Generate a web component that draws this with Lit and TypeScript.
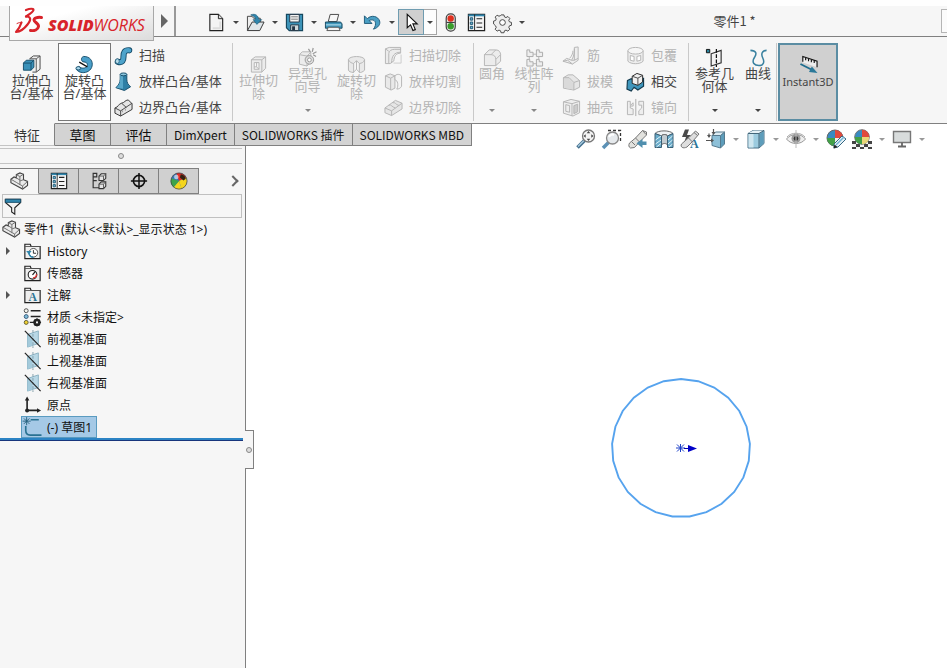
import { LitElement, html, svg, css, nothing, TemplateResult } from "lit";
import { customElement, property, state } from "lit/decorators.js";
import { classMap } from "lit/directives/class-map.js";

/* Every icon is drawn on a 20 x 20 grid. */
const ICONS: Record<string, TemplateResult> = {
  "new": svg`<path d="M3 1.5h9l4.5 4.5v12.5h-13.500z" fill="#f4f4f4" stroke="#222" stroke-width="1.2"/><path d="M12 1.500v4.500h4.500" fill="#ddd" stroke="#222"/><path d="M14 9v7h-8" fill="none" stroke="#ddd" stroke-width="2"/>`,
  open: svg`<path d="M1.500 18.500V3.500h5l1.500 2h7v5" fill="#eee" stroke="#444"/><path d="M1.500 18.500l5-9h12.500l-4.500 9z" fill="#dfe6ea" stroke="#333"/><path d="M5 2c5-2 8 1 8.500 5h3l-5 5-4-5h2.500c0-3-2-4-5-5z" fill="#2f86ad" stroke="#1c5c7c" stroke-width=".7"/>`,
  save: svg`<path d="M1.500 1.500h17v17h-14l-3-3z" fill="#3d93b8" stroke="#16485f" stroke-width="1.200"/><path d="M5 1.500h10v8H5z" fill="#f3f3f3" stroke="#234"/><path d="M6.500 4h7M6.500 6.500h7" stroke="#777"/><path d="M6 12.500h8.500v6H6z" fill="#cfd8dc" stroke="#234"/><path d="M7.500 14h3v4h-3z" fill="#234"/>`,
  print: svg`<path d="M6.500 1.500h9l-2 7.500h-9z" fill="#f7f7f7" stroke="#444"/><path d="M1.500 9.500h16l1.500 2v4.500h-17.500z" fill="#3f96ba" stroke="#16485f"/><path d="M2 12.500h16" stroke="#c5e6f2"/><path d="M4.500 15h11l1.500 3.500h-14z" fill="#f3f3f3" stroke="#555"/>`,
  undo: svg`<path d="M1.500 3v8h8l-3-3c4-2 7.500 0 6.500 5-.3 1.500-1 2.500-2 4 5-1.500 7.500-5 6.500-8.500C16 3.500 9 1.500 4.500 6z" fill="#4a9fc4" stroke="#205a78"/>`,
  cursor: svg`<path d="M5.500 1.500v14l3.500-3 2.500 6 2.500-1-2.500-6h4.500z" fill="#fff" stroke="#111" stroke-width="1.200"/>`,
  traffic: svg`<rect x="5.500" y="1" width="9.500" height="18" rx="4.500" fill="#eee" stroke="#444" stroke-width="1.300"/><circle cx="10.200" cy="5.800" r="3.400" fill="#e0301e"/><circle cx="10.200" cy="14" r="3.400" fill="#399c2b"/><path d="M6 9.900h8.500" stroke="#222"/>`,
  list: svg`<path d="M1.500 1.500h17v17h-17z" fill="#f6f6f6" stroke="#222" stroke-width="1.300"/><path d="M1.500 1.500h17v2h-17z" fill="#2f86ad"/><path d="M8 1.500v17" stroke="#222"/><path d="M3.500 5h2.500v2.500H3.500zM3.500 9.500h2.500v2.500H3.500zM3.500 14h2.500v2.500H3.500z" fill="#75b4d0" stroke="#1d5976"/><path d="M10 6h6M10 10.500h6M10 15h6" stroke="#222" stroke-width="1.200"/>`,
  gear: svg`<path d="M8.500 2h3l.6 2.100 1.600.7 2-1.100 2 2-1.100 2 .7 1.600 2.100.6v3l-2.100.6-.7 1.600 1.100 2-2 2-2-1.100-1.600.7-.6 2.100h-3l-.6-2.100-1.600-.7-2 1.100-2-2 1.100-2-.7-1.600L.6 11.500v-3l2.100-.6.7-1.600-1.100-2 2-2 2 1.100 1.600-.7z" fill="#eee" stroke="#444"/><circle cx="10" cy="10" r="3" fill="#fff" stroke="#444"/>`,

  extrude: svg`<path d="M8 4l4-3h7v14l-4 3h-4" fill="#f0f0f0" stroke="#444"/><path d="M15 4v14M15 4l4-3M8 4h7" fill="none" stroke="#555"/><path d="M1.500 8.500l3-3h8v7.500l-3 3h-8z" fill="#3a91b9" stroke="#174e6b"/><path d="M1.500 8.500h8v7.500M9.500 8.500l3-3" fill="none" stroke="#174e6b"/>`,
  revolve: svg`<path d="M9 1.500c7 0 10 5 9 10-1 5-6 7.500-10.500 7-3-.4-5-1.600-6-3.500l2.500-3c2 2 6 2.500 8 .5 2-2 1-4.500-1.500-5L8 7C6 5 6.500 2.500 9 1.500z" fill="#4a9fc9" stroke="#174e6b"/><path d="M4.500 7.500l8.500 5" stroke="#111" stroke-width="1.300"/><ellipse cx="3.500" cy="14" rx="2.500" ry="1.800" fill="#a9d6ea" stroke="#174e6b"/>`,
  sweep: svg`<path d="M4 16.500c5 1.500 6-1.500 6-5.500 0-4 1-7 6-6.500" fill="none" stroke="#174e6b" stroke-width="6.500" stroke-linecap="round"/><path d="M4 16.500c5 1.500 6-1.500 6-5.500 0-4 1-7 6-6.500" fill="none" stroke="#4da3cb" stroke-width="4.500" stroke-linecap="round"/><ellipse cx="3.500" cy="16" rx="2" ry="2.500" fill="#b5dceb" stroke="#174e6b" stroke-width=".7"/>`,
  loft: svg`<path d="M6.500 2.500h7v5c0 4 1.500 6 4 8l-6.500 4-9-3c2.500-2.500 4.500-5 4.500-9z" fill="#2f7fa5" stroke="#174e6b"/><path d="M6.500 2.500h3v15l-7-1c2.500-2.500 4-5 4-9z" fill="#58a7c9"/><ellipse cx="10" cy="2.500" rx="3.500" ry="1.500" fill="#8cc5dc" stroke="#174e6b"/>`,
  boundary: svg`<path d="M1 10.500c4-1 3-4 7-5s3-3 7-3.500l4 4v6l-12 7-6-3z" fill="#e5e5e5" stroke="#333"/><path d="M1 10.500l6 3 12-8M7 13.500V19M8 5.500l5 4.500" fill="none" stroke="#444"/><path d="M9 15v-2M12 13.300v-2" stroke="#999"/>`,

  extrudeCut: svg`<path d="M2.500 5l4-3h11v12l-4 4h-11z" fill="#ececec" stroke="#b4b4b4"/><path d="M2.500 5h11v13M13.500 5l4-3" fill="none" stroke="#b4b4b4"/><path d="M5.500 8h5v7h-5z" fill="#f8f8f8" stroke="#b4b4b4"/><path d="M8 8v4.500H5.500M8 12.500l2.500 2.500" fill="none" stroke="#b4b4b4"/>`,
  hole: svg`<path d="M1.500 7l3-3h9v11l-4 4-8-2z" fill="#ececec" stroke="#b4b4b4"/><path d="M1.500 7l8 1.500V19M9.500 8.500l4-4" fill="none" stroke="#b4b4b4"/><circle cx="12" cy="12.500" r="4.500" fill="#ddd" stroke="#999"/><circle cx="12" cy="12.500" r="2" fill="#fff" stroke="#999"/><path d="M11 1l2 3M16 0l-1 4M19.500 4l-4 2M19 9l-3-2" stroke="#999" stroke-width="1.300"/>`,
  revolveCut: svg`<path d="M1.500 5C2 .5 18 .5 18.500 5v11c-2 2-4 2.500-5.500 2.500V9L10 6 7 9v9.500C4 18 2 17.500 1.500 16z" fill="#e9e9e9" stroke="#b4b4b4"/><path d="M10 6v9l-3 3M10 15l3 3M1.500 5C3 8 5 8.500 7 9M18.500 5c-1 3-3 3.500-5.500 4" fill="none" stroke="#b4b4b4"/>`,
  sweepCut: svg`<path d="M1.500 3l4-1.500h12v6c-5 0-7 4-7 8l-4 3h-5z" fill="#ececec" stroke="#b4b4b4"/><path d="M5 18V8c0-3 3-4.500 6-4.500h6.500M1.500 3L5 5.500M8 18c0-8 3-11 9-11.500" fill="none" stroke="#b4b4b4"/><path d="M10 18h8V9" fill="none" stroke="#ccc"/>`,
  loftCut: svg`<path d="M1.500 4l5-2 5 2v13l-4 2-6-3z" fill="#e9e9e9" stroke="#b4b4b4"/><path d="M1.500 4L7 6.500 11.500 4M7 6.500V19" fill="none" stroke="#b4b4b4"/><path d="M11.500 4c3-3 7-1 7 1v10c-1 2-3 3-5 3 2-4 1-9-2-10z" fill="#f4f4f4" stroke="#b4b4b4"/>`,
  boundaryCut: svg`<path d="M1 10.500l11-8 7 3v6l-11 7-7-3z" fill="#e6e6e6" stroke="#b4b4b4"/><path d="M1 10.500l7 3 11-8M8 13.500v5M5 7.500c3-1 3 2 7 3M9 5c3-1 3 2 7 3" fill="none" stroke="#b4b4b4"/>`,
  fillet: svg`<path d="M1.500 7l5-5h7c3.500 0 5 2.500 5 5v7l-5 4.500h-12z" fill="#ececec" stroke="#b4b4b4"/><path d="M1.500 7h7c3.500 0 5 2.500 5 5v6.500M13.500 12l5-5M8.500 7l5-5" fill="none" stroke="#b4b4b4"/>`,
  pattern: svg`<path d="M2 2h3v2.500h3.500V9H2zM2 12h3v2.500h3.500V19H2zM12 2h3v2.500h3.500V9H12zM12 12h3v2.500h3.500V19H12z" fill="#eee" stroke="#aaa"/><path d="M8.500 6.500H12M4.500 9v3M14.500 9v3M8.500 16.500H12" stroke="#b4b4b4"/>`,
  rib: svg`<path d="M13 1.500l4-.5v14l-6 4-10-3 4-3 5 2c3-5 3-8 3-13.500z" fill="#eee" stroke="#b4b4b4"/><path d="M13 3v12l-3 0M13 15l4-2M1 16l5-1 5 4M8 13c2-2 3.500-5 3.500-8" fill="none" stroke="#b4b4b4"/>`,
  draft: svg`<path d="M1.500 6l5-3h5l7 6v7l-6 3-11-2z" fill="#e6e6e6" stroke="#b4b4b4"/><path d="M2 6.500h5l5 5v7l-10-2z" fill="#dadada"/><path d="M1.500 6h6l5 5v8M12.500 11l6-2" fill="none" stroke="#b4b4b4"/>`,
  shell: svg`<path d="M1.500 4l8-2.500 9 2v12l-7 3.500-10-3z" fill="#eee" stroke="#b4b4b4"/><path d="M1.500 4l9 2v13M10.500 6l8-2.500M4 7l4 1v7l-4-1z" fill="none" stroke="#b4b4b4"/><path d="M12.500 8l4-1.500v8l-4 2z" fill="#ccc" stroke="#b4b4b4"/>`,
  wrap: svg`<path d="M2 5v11c3 3.500 13 3.500 16 0V5" fill="#eee" stroke="#b4b4b4"/><ellipse cx="10" cy="5" rx="8" ry="3.500" fill="#f6f6f6" stroke="#b4b4b4"/><path d="M4.500 10l4 1v5l-4-1zM11.500 11l4-1v5l-4 1z" fill="#fff" stroke="#b4b4b4"/>`,
  intersect: svg`<path d="M1.500 9l4-2 4 3 4 2 5-4V6v9l-6 4-4-3-3 4-4.500-2z" fill="#3f96bc" stroke="#12394d" stroke-width="1.200"/><path d="M6.500 4.500l5-3 6 2v7l-5 3.500-6-2z" fill="#f0f0f0" stroke="#222"/><path d="M6.500 4.500l6 2 5-3M12.500 6.500V14" fill="none" stroke="#444"/>`,
  mirror: svg`<path d="M1.500 3.500v14h6v-6l-3-1v-2h3V5l-3 3v-4.500zM18.500 3.500v14h-5v-4l3-3v-3h-3v-4z" fill="#eee" stroke="#b4b4b4"/><path d="M10.300 1v18" stroke="#aaa"/>`,
  refgeo: svg`<path d="M1.500 1.500h3.500v3.500H1.500z" fill="#2b86a0" stroke="#111"/><path d="M6.500 6l10.500-3.500v13L6.500 19z" fill="#f3f3f3" stroke="#333" stroke-width="1.200"/><path d="M12 1v19" stroke="#111" stroke-width="1.300" stroke-dasharray="4 1.500"/>`,
  curve: svg`<path d="M1.500 2.500c6 .5 7 3 4.500 7-4 6 0 9 4.500 9 5 0 6-4 4-8-2-4-1-8 4-8" fill="none" stroke="#38809f" stroke-width="1.600"/>`,
  instant: svg`<path d="M4 8V1.500l15 5V13L4 8z" fill="#eee" stroke="none"/><path d="M4 7V1.500l15 5V13M7 2.500v3M10 3.500v3M13 4.500v3M16 5.500v3" fill="none" stroke="#111" stroke-width="1.200"/><path d="M1.500 9.500l12 6" stroke="#1f6d8e" stroke-width="2"/><path d="M13.500 12l6 7-9-1z" fill="#2a7899"/>`,

  zoomFit: svg`<path d="M1.500 18.500l7-7" stroke="#426f8e" stroke-width="3.600"/><path d="M2 17.500l6-6" stroke="#a7c9dc" stroke-width="1.500"/><circle cx="12.500" cy="7" r="6" fill="#f4f4f4" stroke="#777" stroke-width="1.300"/><path d="M12.500 2l1.800 2.200h-3.600zM12.500 12l1.800-2.200h-3.600zM7.500 7l2.200-1.800v3.600zM17.500 7l-2.200-1.800v3.600z" fill="#444"/>`,
  zoomArea: svg`<path d="M6 1.500h12.500V14" fill="none" stroke="#333" stroke-width="1.300" stroke-dasharray="3 2"/><path d="M1 19l6-6" stroke="#5c91b5" stroke-width="3.500"/><circle cx="10.500" cy="9" r="6" fill="#e5e9ec" stroke="#888" stroke-width="1.300"/><path d="M7 8c1-2 3-3 5-2" fill="none" stroke="#fff" stroke-width="2"/>`,
  prevView: svg`<path d="M1.500 14l6-5 7-7.500 4 1.500v3l-7 7-5 5.500-4 .5c-2-1-2-3-1-5z" fill="#e2e2de" stroke="#777"/><path d="M7.500 9l4 4M14.500 1.500l3.500 4M4 13l3 3" fill="none" stroke="#777"/><path d="M18.500 12.500v3.500h-4v3l-6-4.700 6-4.300v2.500z" fill="#508fae"/>`,
  section: svg`<path d="M1 4.500C4 1 16 1 19 4.500L13.500 7C12.500 5 8.500 5 7.500 7z" fill="#eef2f4" stroke="#666"/><path d="M7.500 7c1-2 5-2 6 0v9c-1-2-5-2-6 0z" fill="#c3ccd1" stroke="#666"/><path d="M1 4.500L7.500 7v11.500H1zM19 4.500L13.500 7v11.500H19z" fill="#6aacca" stroke="#3a5f75"/><path d="M1.500 11l5.500-4M1.500 15l5.500-4M2.500 18l4.500-3.500M14 11l4.500-4M14 15l4.500-4M15 18l3.500-3" stroke="#dff1f8"/>`,
  dynView: svg`<path d="M9 .5H5L2 8h4l-2 6 7-8H7z" fill="#4a4a4a"/><path d="M1.500 15l8-7 6-6 3.500 3-6 7-6 6c-4 2-7 0-5.500-3z" fill="#dedede" stroke="#777"/><path d="M8.500 9l4 4M14 3.500l3.500 3" stroke="#777"/><text x="10" y="19" class="glyph letter">A</text>`,
  orient: svg`<path d="M6 6.500h8.500V19L6 16.500z" fill="#8dc0d8" stroke="#557a8e"/><path d="M14.500 6.500l4-3.500v12l-4 4z" fill="#5d9dbb" stroke="#557a8e"/><path d="M6 6.500L9.500 3h9l-4 3.500z" fill="#dcebf2" stroke="#557a8e"/><path d="M0 11.500h5M7.500 0v3.500M3 4.500v3" stroke="#555" stroke-width="1.200"/><path d="M5 9.500l3 2-3 2zM5.500 3h4l-2 3zM1 6h4L3 9z" fill="#555"/>`,
  display: svg`<path d="M2 4.500l5-3h11v13l-5 4.500H2z" fill="#9ccbdf" stroke="#4a7187"/><path d="M2.500 4l5-2.500h10L13 4z" fill="#e5f1f6"/><path d="M2.500 5h5v13.500h-5z" fill="#cfe6ef"/><path d="M13.500 5l4-3v12.500l-4 3.500z" fill="#5d9dbb"/><path d="M2 4.500h11V19M13 4.500l5-3" fill="none" stroke="#44677a"/>`,
  eye: svg`<path d="M.5 10C5 4 15 4 19.500 10 15 16 5 16 .5 10z" fill="#eee" stroke="#999"/><circle cx="10" cy="9.500" r="4.500" fill="#999"/><circle cx="10" cy="9.500" r="2.300" fill="#333"/><path d="M10 1v18" stroke="#bbb"/><path d="M1 8C5 3 15 3 19 8" fill="none" stroke="#aaa"/>`,
  appearance: svg`<circle cx="9" cy="9" r="8" fill="#388bc1" stroke="#666"/><path d="M9 9V1a8 8 0 0 1 8 8z" fill="#e14a3d"/><path d="M9 9h8a8 8 0 0 1-8 8z" fill="#eee"/><path d="M9 9v8a8 8 0 0 1-8-8z" fill="#43a047"/><path d="M8 15l8-8 4 3-8 8-4 1z" fill="#e6f2f8" stroke="#326682"/><path d="M10 16l8-8" stroke="#6eb1d1" stroke-width="1.500"/><path d="M7.500 19.500l1-4 3 2.500z" fill="#222"/>`,
  scene: svg`<path d="M0 12h20v8H0z" fill="#f4f4f4"/><path d="M0 12h4v3H0zM4 15h4v3H4zM8 18h4v2H8zM12 15h4v3h-4zM16 12h4v3h-4zM0 18h4v2H0zM16 18h4v2h-4z" fill="#444"/><circle cx="10" cy="8" r="7.300" fill="#388bc1" stroke="#777"/><path d="M10 8V.7A7.300 7.300 0 0 1 17.300 8z" fill="#e14a3d"/><path d="M10 8h7.300A7.300 7.300 0 0 1 10 15.300z" fill="#e9d678"/><path d="M10 8v7.300A7.300 7.300 0 0 1 2.700 8z" fill="#43a047"/>`,
  monitor: svg`<path d="M1.500 2.500h17v11h-17z" fill="#d8dcdc" stroke="#777" stroke-width="1.400"/><path d="M10 13.500V17M6 17.500h8" stroke="#666" stroke-width="1.800"/>`,

  part: svg`<path d="M1 8l3.500-2.500L7 6.500V3l4-2 4 1.500v6l4.500 2v4.500L14 19 1 12z" fill="#eaeaea" stroke="#444" stroke-width="1.200"/><path d="M1 8l6 3.500 4 2.500 3 1.500V19M14 15.500l5.500-5M7 6.500l4 2.500v5M7 3l4 2v4M11 5l4-2.500M11 10l4-1.500" fill="none" stroke="#666"/>`,
  config: svg`<path d="M3.500 1.500H7.500v4H3.500zM3.500 5.500V17.500H10M3.500 9.500h4" fill="none" stroke="#333" stroke-width="1.300"/><path d="M10 4.500l2.500-2.500h5v5l-2.500 2.500h-5zM10 13.500l2.500-2.500h5v5l-2.500 2.500h-5z" fill="#e3e3e3" stroke="#333" stroke-width="1.200"/><path d="M10 4.500h5v5M15 4.500L17.500 2M10 13.500h5v5M15 13.500l2.500-2.500" fill="none" stroke="#555"/>`,
  target: svg`<circle cx="10" cy="10" r="6.200" fill="none" stroke="#111" stroke-width="1.800"/><path d="M10 1v18M1 10h18" stroke="#111" stroke-width="1.700"/>`,
  ball: svg`<circle cx="10" cy="10" r="9" fill="#3978b6"/><path d="M10 10L7 1.500A9 9 0 0 1 18 6z" fill="#de2b25"/><path d="M10 10l8-4a9 9 0 0 1-5 12.500z" fill="#f4d51d"/><path d="M10 10l3 8.500A9 9 0 0 1 4 17z" fill="#f4d51d"/><path d="M10 10l-6 7a9 9 0 0 1-2.500-10z" fill="#3da449"/><path d="M11 6l1-3.500c3 .5 5 2 5.500 5l-2.500 2z" fill="#321"/><circle cx="7" cy="5.500" r="2.500" fill="#fff" opacity=".6"/><circle cx="10" cy="10" r="9" fill="none" stroke="#444" stroke-width=".8"/>`,
  filter: svg`<path d="M1.500 2.500h17v3.500l-6.500 6v7l-3.500-2.500V12L1.500 6z" fill="#f2f2f2" stroke="#222" stroke-width="1.200"/><path d="M1.500 2.500h17v3.500h-17z" fill="#2f86ad" stroke="#174e6b"/>`,
  history: svg`<path d="M1.500 18.500v-16h6l1 2.500h10v13.500z" fill="#eee" stroke="#222" stroke-width="1.300"/><path d="M1.500 5h17" stroke="#555"/><circle cx="11" cy="12" r="4.800" fill="#fff" stroke="#444"/><path d="M11 9v3.500h3" fill="none" stroke="#222"/><path d="M3 10l6 0-3 4z" fill="#2f86ad"/><path d="M6 12c.5 3 2.500 5 5 5" fill="none" stroke="#2f86ad" stroke-width="1.600"/>`,
  sensor: svg`<path d="M1.500 18.500v-16h6l1 2.500h10v13.500z" fill="#eee" stroke="#222" stroke-width="1.300"/><path d="M1.500 5h17" stroke="#555"/><circle cx="10" cy="12" r="4.800" fill="#fff" stroke="#222" stroke-width="1.200"/><path d="M10 12l3-3.500" stroke="#222" stroke-width="1.400"/><path d="M10.500 15.500c2 0 4-1.500 4-4" fill="none" stroke="#d33" stroke-width="1.700"/>`,
  note: svg`<path d="M1.500 18.500v-16h6l1 2.500h10v13.500z" fill="#eee" stroke="#222" stroke-width="1.300"/><path d="M1.500 5h17" stroke="#555"/><text x="5.500" y="17" class="glyph bold">A</text>`,
  material: svg`<path d="M8 3h11M8 9.500h11M7 16h5" stroke="#222" stroke-width="1.600"/><circle cx="3" cy="3" r="2.200" fill="#f4f4ee" stroke="#444"/><circle cx="3" cy="9.500" r="2.200" fill="#7ebcd8" stroke="#357"/><circle cx="3" cy="16" r="2.200" fill="#f0d030" stroke="#553"/><circle cx="15" cy="16" r="3" fill="none" stroke="#222" stroke-width="2.200"/><path d="M15 11.500v9M10.500 16h9M12 13l6 6M18 13l-6 6" stroke="#222" stroke-width="1.400"/><circle cx="15" cy="16" r="1.200" fill="#f6f6f6"/>`,
  plane: svg`<path d="M4.500 5l12-4v14l-12 4z" fill="#b9d8e6" stroke="#86aebf"/><path d="M4.500 5l5 5v7.500l-5 1.500z" fill="#a3cadb"/><path d="M10.500 0v20" stroke="#7c98a5" stroke-dasharray="3 1.500"/><path d="M1.500 1l17.500 18" stroke="#222" stroke-width="1.300"/>`,
  origin: svg`<path d="M4 16V4M4 16h12" stroke="#222" stroke-width="1.800"/><path d="M4 .5l2.500 4.500h-5zM19.500 16L15 13.500v5z" fill="#222"/><circle cx="4" cy="16" r="2.200" fill="#222"/>`,
  sketch: svg`<path d="M8 2h9M2.500 9v5c0 3.500 2 5 5 5H20" fill="none" stroke="#2a7292" stroke-width="1.800"/><path d="M3.500-1v9M-1 3.500h9M.5.500l6 6M6.500.500l-6 6" stroke="#225d7a"/>`,
};

const icon = (name: string) =>
  html`<svg class="icon" viewBox="0 0 20 20" aria-hidden="true">${ICONS[name]}</svg>`;

const shared = css`
  :host, * { box-sizing: border-box; }
  button {
    appearance: none; border: 0; padding: 0; margin: 0; background: none;
    font: inherit; color: inherit; cursor: default;
  }
  .icon { display: block; width: 20px; height: 20px; flex: none; overflow: visible; }
  .glyph { font-family: "Liberation Serif", serif; font-size: 13px; fill: #2c7597; }
  .bold { font-weight: bold; }
  .letter { font-weight: bold; font-size: 12px; }
  .arrow { width: 0; height: 0; border: 3px solid transparent; border-top-color: #444; border-bottom: 0; }
`;

interface Tool { icon: string; label: string; menu?: boolean; }

@customElement("title-bar")
export class TitleBar extends LitElement {
  static styles = [shared, css`
    :host { display: flex; align-items: stretch; height: 37px; background: #f6f6f6; border-top: 6px solid #fefefe; border-bottom: 1px solid #808080; }
    .logo { position: relative; z-index: 2; display: flex; align-items: center; gap: 5px; width: 145px; height: 35px; margin-left: 9px; padding-left: 5px; border: 1px solid #a8a8a8; border-top: 0; background: linear-gradient(165deg, #ffffff 30%, #dcdcdc); color: #d8232a; flex: none; }
    .mark { width: 28px; height: 29px; flex: none; overflow: visible; }
    .word { font: italic 16px/20px "Open Sans", sans-serif; padding-top: 4px; }
    .word b { font-weight: 800; }
    .flyout { display: flex; align-items: center; justify-content: center; width: 22px; border-right: 2px solid #999; flex: none; }
    .play { width: 0; height: 0; border: 7px solid transparent; border-left-color: #666; border-right: 0; }
    .tools { display: flex; align-items: center; padding-left: 27px; padding-top: 2px; flex: none; }
    .group { display: flex; align-items: stretch; height: 26px; }
    .tool { display: flex; align-items: center; justify-content: center; width: 26px; }
    .tool .icon { width: 19px; height: 19px; }
    .drop { display: flex; align-items: center; justify-content: center; width: 13px; }
    .active .tool { background: #d0d0d0; border: 1px solid #6f9cb0; }
    .active .drop { background: #fdfdfd; border: 1px solid #a5a5a5; border-left: 0; }
    .title { flex: 1; align-self: center; text-align: center; font-size: 13px; line-height: 18px; margin: 0; font-weight: 400; color: #444; white-space: nowrap; font-family: "Noto Sans CJK SC", sans-serif; }
    .search { width: 6px; height: 24px; align-self: center; border: 1px solid #b5b5b5; border-right: 0; background: #fbfbfb; padding: 0; }
  `];

  private tools: Tool[] = [
    { icon: "new", label: "新建", menu: true },
    { icon: "open", label: "打开", menu: true },
    { icon: "save", label: "保存", menu: true },
    { icon: "print", label: "打印", menu: true },
    { icon: "undo", label: "撤消", menu: true },
    { icon: "cursor", label: "选择", menu: true },
    { icon: "traffic", label: "重建模型" },
    { icon: "list", label: "文件属性" },
    { icon: "gear", label: "选项", menu: true },
  ];

  render() {
    return html`
      <div class="logo">
        <svg class="mark" viewBox="0 0 28 29" aria-hidden="true">
          <g fill="none" stroke="#d8232a" stroke-width="2.200" stroke-linecap="round" stroke-linejoin="round">
            <path d="M11 1c4-1.500 7.500-1.800 7.500 0S15 5 11 7.500"/>
            <path d="M11 7.500c5 0 5.500 3 1.500 8-3 4-6.500 7-11.500 7.500 2-2 4-5 5.500-9.500"/>
            <path d="M2 14.500c2-1 3-1 4.500-1" stroke-width="1"/>
            <path d="M26.500 8.500c-4.500-.5-7.500.5-7.500 2.500s5 3.500 4.500 6.500-4 4.500-8 4" stroke-width="3"/>
          </g>
        </svg>
        <span class="word"><b>SOLID</b>WORKS</span>
      </div>
      <button class="flyout" aria-label="菜单"><span class="play"></span></button>
      <div class="tools">
        ${this.tools.map((t) => html`
          <div class=${classMap({ group: true, active: t.icon === "cursor" })}>
            <button class="tool" aria-label=${t.label}>${icon(t.icon)}</button>
            ${t.menu ? html`<button class="drop" aria-label="${t.label} 菜单"><span class="arrow"></span></button>` : nothing}
          </div>`)}
      </div>
      <h1 class="title">零件1 *</h1>
      <input class="search" aria-label="搜索" />
    `;
  }
}

interface Command { icon: string; label: string; menu?: boolean; off?: boolean; state?: "hover" | "on"; }
interface Group { cls: string; large: Command[]; columns: Command[][]; }

@customElement("command-ribbon")
export class CommandRibbon extends LitElement {
  static styles = [shared, css`
    :host { display: flex; height: 87px; padding-top: 6px; background: #f6f6f6; border-bottom: 1px solid #808080; color: #444; font-size: 13px; line-height: 13px; overflow: hidden; }
    .group { display: flex; height: 78px; flex: none; border-right: 1px solid #c9c9c9; }
    .large { display: flex; flex-direction: column; align-items: center; width: 53px; height: 78px; padding-top: 11px; border: 1px solid transparent; white-space: pre-line; }
    .large.menu { padding-top: 4px; }
    .large .icon { width: 19px; height: 19px; }
    .large .arrow { margin-top: auto; margin-bottom: 8px; }
    .large.hover { background: #fff; border-color: #777; }
    .large.on { width: 60px; background: #d0d0d0; border: 2px solid #5b8da3; padding-top: 10px; margin-left: 1px; font-size: 11px; line-height: 16px; }
    .column { display: flex; flex-direction: column; margin-top: -1px; }
    .small { display: flex; align-items: center; gap: 6px; height: 26px; white-space: nowrap; text-align: left; }
    .small .icon { width: 19px; height: 19px; }
    .off { color: #b4b4b4; }
    .off .arrow { border-top-color: #888; }
    .boss { padding-left: 5px; width: 233px; }
    .boss .column { padding-left: 3px; }
    .cut { width: 241px; padding-left: 1px; }
    .cut .large { width: 49px; }
    .cut .column { padding-left: 3px; }
    .edit { width: 215px; }
    .edit .large { width: 36px; }
    .edit .large:nth-child(2) { width: 48px; }
    .edit .column { width: 64px; padding-left: 4px; }
    .ref { width: 88px; }
    .ref .large { width: 51px; }
    .ref .large:nth-child(2) { width: 36px; }
    .last { border-right: 0; }
  `];

  private groups: Group[] = [
    { cls: "boss",
      large: [{ icon: "extrude", label: "拉伸凸\n台/基体" }, { icon: "revolve", label: "旋转凸\n台/基体", state: "hover" }],
      columns: [[{ icon: "sweep", label: "扫描" }, { icon: "loft", label: "放样凸台/基体" }, { icon: "boundary", label: "边界凸台/基体" }]] },
    { cls: "cut",
      large: [{ icon: "extrudeCut", label: "拉伸切\n除", off: true }, { icon: "hole", label: "异型孔\n向导", menu: true, off: true }, { icon: "revolveCut", label: "旋转切\n除", off: true }],
      columns: [[{ icon: "sweepCut", label: "扫描切除", off: true }, { icon: "loftCut", label: "放样切割", off: true }, { icon: "boundaryCut", label: "边界切除", off: true }]] },
    { cls: "edit",
      large: [{ icon: "fillet", label: "圆角", menu: true, off: true }, { icon: "pattern", label: "线性阵\n列", menu: true, off: true }],
      columns: [
        [{ icon: "rib", label: "筋", off: true }, { icon: "draft", label: "拔模", off: true }, { icon: "shell", label: "抽壳", off: true }],
        [{ icon: "wrap", label: "包覆", off: true }, { icon: "intersect", label: "相交" }, { icon: "mirror", label: "镜向", off: true }]] },
    { cls: "ref", large: [{ icon: "refgeo", label: "参考几\n何体", menu: true }, { icon: "curve", label: "曲线", menu: true }], columns: [] },
    { cls: "last", large: [{ icon: "instant", label: "Instant3D", state: "on" }], columns: [] },
  ];

  render() {
    return this.groups.map((g) => html`
      <div class="group ${g.cls}">
        ${g.large.map((c) => html`
          <button class="large ${c.state ?? ""} ${c.menu ? "menu" : ""} ${c.off ? "off" : ""}" ?disabled=${c.off ?? false}>${icon(c.icon)}<span>${c.label}</span>${c.menu ? html`<span class="arrow"></span>` : nothing}</button>`)}
        ${g.columns.map((col) => html`
          <div class="column">
            ${col.map((c) => html`<button class="small ${c.off ? "off" : ""}" ?disabled=${c.off ?? false}>${icon(c.icon)}<span>${c.label}</span></button>`)}
          </div>`)}
      </div>`);
  }
}

@customElement("ribbon-tabs")
export class RibbonTabs extends LitElement {
  static styles = [shared, css`
    :host { position: relative; z-index: 1; display: flex; height: 23px; margin-top: -1px; background: #fff; font: 12px/20px "Noto Sans CJK SC", sans-serif; color: #111; box-shadow: inset 0 1px #808080; }
    .tab { height: 23px; padding: 0 7px; border: 1px solid #808080; border-left: 0; background: #d3d3d3; white-space: nowrap; flex: none; }
    .cjk { width: 56px; padding: 0; font-size: 13px; }
    .current { width: 55px; background: #f6f6f6; border-top-color: #f6f6f6; border-bottom-color: #c4c4c4; color: #333; }
    .hud { position: absolute; right: 18px; top: 5px; display: flex; height: 22px; }
    .view { display: flex; align-items: center; justify-content: center; width: 26px; }
    .drop { display: flex; align-items: center; justify-content: center; width: 14px; }
    .drop .arrow { border-top-color: #999; }
  `];

  @state() private current = 0;
  private tabs = ["特征", "草图", "评估", "DimXpert", "SOLIDWORKS 插件", "SOLIDWORKS MBD"];
  private views: Tool[] = [
    { icon: "zoomFit", label: "整屏显示全图" },
    { icon: "zoomArea", label: "局部放大" },
    { icon: "prevView", label: "上一视图" },
    { icon: "section", label: "剖面视图" },
    { icon: "dynView", label: "动态注解视图" },
    { icon: "orient", label: "视图定向", menu: true },
    { icon: "display", label: "显示样式", menu: true },
    { icon: "eye", label: "隐藏/显示项目", menu: true },
    { icon: "appearance", label: "编辑外观" },
    { icon: "scene", label: "应用布景", menu: true },
    { icon: "monitor", label: "视图设定", menu: true },
  ];

  render() {
    return html`
      ${this.tabs.map((t, i) => html`
        <button class=${classMap({ tab: true, cjk: i < 3, current: i === this.current })} @click=${() => (this.current = i)}>${t}</button>`)}
      <div class="hud">
        ${this.views.map((v) => html`
          <button class="view" aria-label=${v.label}>${icon(v.icon)}</button>
          ${v.menu ? html`<button class="drop" aria-label="${v.label} 菜单"><span class="arrow"></span></button>` : nothing}`)}
      </div>`;
  }
}

interface Node { icon: string; label: string; expandable?: boolean; selected?: boolean; }

@customElement("feature-panel")
export class FeaturePanel extends LitElement {
  static styles = [shared, css`
    :host { position: relative; display: block; width: 246px; flex: none; background: #f6f6f6; border-right: 1px solid #808080; padding-top: 2px; font-size: 12px; color: #111; }
    .grip { display: flex; align-items: center; justify-content: center; width: 242px; height: 16px; border: 1px solid #c4c4c4; border-width: 1px 0; }
    .dot { width: 6px; height: 6px; border: 1px solid #888; border-radius: 50%; background: #ddd; flex: none; }
    .tabs { display: flex; align-items: stretch; width: 242px; height: 26px; margin-top: 4px; }
    .tab { display: flex; align-items: center; justify-content: center; width: 40px; border: 1px solid #808080; border-left: 0; background: #d0d0d0; }
    .tab .icon { width: 18px; height: 18px; }
    .tab.current { width: 39px; background: #f6f6f6; border-bottom-color: #f6f6f6; }
    .more { width: 18px; margin-left: auto; display: flex; align-items: center; justify-content: center; }
    .chevron { width: 8px; height: 8px; border: 2px solid #666; border-width: 2px 2px 0 0; transform: rotate(45deg); }
    .filter { display: flex; align-items: center; width: 240px; height: 24px; margin-left: 2px; padding-left: 1px; border: 1px solid #c0c0c0; }
    .filter input { flex: 1; min-width: 0; border: 0; background: none; outline: 0; font: inherit; padding: 0 4px; }
    .filter .icon { width: 18px; height: 18px; }
    .tree { list-style: none; margin: 0; padding: 0; }
    .row { display: flex; align-items: center; height: 22px; white-space: pre; line-height: 20px; }
    .root { gap: 4px; padding-left: 2px; }
    .root .icon { width: 18px; height: 18px; }
    .label { padding-top: 2px; }
    .twist { width: 21px; display: flex; padding-left: 6px; flex: none; }
    .mark { width: 0; height: 0; border: 4px solid transparent; border-left-color: #555; border-right: 0; }
    .item { display: flex; align-items: center; gap: 5px; height: 22px; padding: 0 4px 0 1px; border: 1px solid transparent; }
    .item .icon { width: 19px; height: 18px; }
    .selected { background: #a5c9e6; border-color: #5a9bc0; }
    .rollback { width: 243px; height: 3px; background: #2b83c4; border-bottom: 1px solid #18357c; }
    .handle { position: absolute; z-index: 1; left: 245px; top: 284px; display: flex; align-items: center; justify-content: center; width: 9px; height: 39px; border: 1px solid #808080; border-left: 0; background: #f6f6f6; }
  `];

  @property({ type: Number }) current = 0;
  private tabs: Tool[] = [
    { icon: "part", label: "设计树" }, { icon: "list", label: "属性" }, { icon: "config", label: "配置" },
    { icon: "target", label: "DimXpert" }, { icon: "ball", label: "显示" },
  ];
  private nodes: Node[] = [
    { icon: "history", label: "History", expandable: true },
    { icon: "sensor", label: "传感器" },
    { icon: "note", label: "注解", expandable: true },
    { icon: "material", label: "材质 <未指定>" },
    { icon: "plane", label: "前视基准面" },
    { icon: "plane", label: "上视基准面" },
    { icon: "plane", label: "右视基准面" },
    { icon: "origin", label: "原点" },
    { icon: "sketch", label: "(-) 草图1", selected: true },
  ];

  render() {
    return html`
      <div class="grip"><span class="dot"></span></div>
      <div class="tabs">
        ${this.tabs.map((t, i) => html`<button class=${classMap({ tab: true, current: i === this.current })} aria-label=${t.label}>${icon(t.icon)}</button>`)}
        <button class="more" aria-label="更多"><span class="chevron"></span></button>
      </div>
      <label class="filter">${icon("filter")}<input type="text" aria-label="过滤" /></label>
      <ul class="tree">
        <li class="row root">${icon("part")}<span class="label">零件1  (默认<<默认>_显示状态 1>)</span></li>
        ${this.nodes.map((n) => html`
          <li class="row"><span class="twist">${n.expandable ? html`<span class="mark"></span>` : nothing}</span><span class=${classMap({ item: true, selected: !!n.selected })}>${icon(n.icon)}<span class="label">${n.label}</span></span></li>`)}
      </ul>
      <div class="rollback"></div>
      <button class="handle" aria-label="折叠面板"><span class="dot"></span></button>`;
  }
}

@customElement("sketch-canvas")
export class SketchCanvas extends LitElement {
  static styles = css`
    :host { position: relative; display: block; flex: 1; min-width: 0; background: #fff; overflow: hidden; }
    .sketch { position: absolute; left: 364px; top: 231px; width: 142px; height: 142px; }
  `;

  /* The circle is tessellated into straight segments. */
  private outline(sides: number, radius: number) {
    return Array.from({ length: sides }, (_, i) => {
      const a = (i / sides) * Math.PI * 2 - Math.PI / 2;
      return `${(71 + radius * Math.cos(a)).toFixed(1)},${(71 + radius * Math.sin(a)).toFixed(1)}`;
    }).join(" ");
  }

  render() {
    return html`
      <svg class="sketch" viewBox="0 0 142 142" role="img" aria-label="草图1">
        <polygon points=${this.outline(25, 69)} fill="none" stroke="#56a3ee" stroke-width="1.900" />
        <path d="M70.500 67v8M67 67.500l7 7M74 67.500l-7 7M66 71h9" stroke="#1a3fc8" />
        <path d="M74 71.500h5" stroke="#0000b0" />
        <path d="M78 68l9 3.500-9 3.500z" fill="#0000c8" />
      </svg>`;
  }
}

@customElement("app-root")
export class AppRoot extends LitElement {
  static styles = css`
    :host { display: flex; flex-direction: column; min-height: 100vh; background: #fff; font-family: "Noto Sans", "Noto Sans CJK SC", sans-serif; }
    .work { display: flex; flex: 1; }
  `;
  render() {
    return html`
      <title-bar></title-bar>
      <command-ribbon></command-ribbon>
      <ribbon-tabs></ribbon-tabs>
      <main class="work">
        <feature-panel></feature-panel>
        <sketch-canvas></sketch-canvas>
      </main>`;
  }
}
